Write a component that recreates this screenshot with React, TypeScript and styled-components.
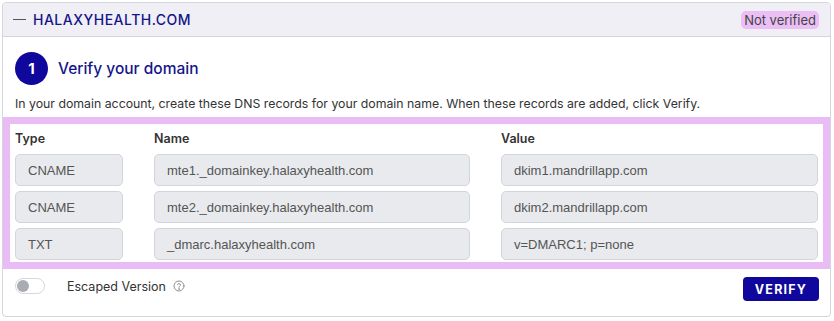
import styled, { createGlobalStyle } from "styled-components";

const Global = createGlobalStyle`
  body {
    margin: 0;
    background: #ffffff;
    font-family: Inter, "Noto Sans", sans-serif;
  }
`;

const Page = styled.div`
  padding: 2px 3px 3px 2px;
`;

const Card = styled.div`
  border: 1px solid #d3d6db;
  border-radius: 4px;
  overflow: hidden;
`;

const Header = styled.div`
  display: flex;
  align-items: center;
  justify-content: space-between;
  height: 33px;
  padding: 0 11px 0 10px;
  background: #efeff5;
  border-bottom: 1px solid #d3d6db;
`;

const Title = styled.div`
  display: flex;
  align-items: center;
  gap: 7px;
  color: #15158a;
  font-size: 14px;
  font-weight: 500;
  letter-spacing: 0.5px;
`;

const Dash = styled.span`
  display: inline-block;
  width: 13px;
  height: 1px;
  background: #555;
`;

const Badge = styled.span`
  background: #ebbff6;
  color: #444;
  font-size: 13px;
  padding: 1px 3px;
  border-radius: 5px;
`;

const Body = styled.div`
  padding: 15px 0 0;
`;

const Step = styled.div`
  display: flex;
  align-items: center;
  gap: 10px;
  padding: 0 12px;
`;

const Circle = styled.div`
  width: 33px;
  height: 33px;
  border-radius: 50%;
  background: #10079c;
  color: #fff;
  display: flex;
  align-items: center;
  justify-content: center;
  font-size: 15px;
  font-weight: 700;
`;

const StepTitle = styled.div`
  color: #15158a;
  font-size: 15.5px;
  font-weight: 500;
`;

const Intro = styled.p`
  margin: 11px 0 6px;
  padding: 0 12px;
  font-size: 12.3px;
  color: #333;
`;

const Records = styled.div`
  border: 7px solid #eabcf6;
  padding: 3px 5px 2px 5px;
  display: grid;
  grid-template-columns: 108px 316px 317px;
  column-gap: 31px;
  row-gap: 5px;
`;

const ColHead = styled.div`
  font-size: 12.5px;
  font-weight: 600;
  color: #333;
  height: 22px;
  display: flex;
  align-items: center;
`;

const Field = styled.div`
  height: 30px;
  display: flex;
  align-items: center;
  padding: 0 12px;
  background: #e8eaed;
  border: 1px solid #d2d5d9;
  border-radius: 5px;
  font-family: "Liberation Sans", Arial, sans-serif;
  font-size: 13px;
  color: #555;
`;

const Footer = styled.div`
  display: flex;
  align-items: center;
  justify-content: space-between;
  padding: 8px 11px 15px 12px;
`;

const Left = styled.div`
  display: flex;
  align-items: center;
  margin-bottom: 6px;
`;

const Toggle = styled.div`
  width: 26px;
  height: 14px;
  border: 1px solid #d6d8dc;
  border-radius: 8px;
  display: flex;
  align-items: center;
  padding: 0 1px;
  margin-right: 22px;
`;

const Knob = styled.div`
  width: 12px;
  height: 12px;
  border-radius: 50%;
  background: #a9adb3;
`;

const Label = styled.span`
  font-size: 12.5px;
  color: #333;
  margin-right: 7px;
`;

const Button = styled.button`
  background: #10079c;
  color: #fff;
  border: none;
  border-radius: 4px;
  width: 76px;
  height: 24px;
  font-family: Inter, sans-serif;
  font-size: 12.5px;
  font-weight: 700;
  letter-spacing: 1.2px;
`;

const rows = [
  ["CNAME", "mte1._domainkey.halaxyhealth.com", "dkim1.mandrillapp.com"],
  ["CNAME", "mte2._domainkey.halaxyhealth.com", "dkim2.mandrillapp.com"],
  ["TXT", "_dmarc.halaxyhealth.com", "v=DMARC1; p=none"],
];

export default function App() {
  return (
    <>
      <Global />
      <Page>
        <Card>
          <Header>
            <Title>
              <Dash />
              HALAXYHEALTH.COM
            </Title>
            <Badge>Not verified</Badge>
          </Header>
          <Body>
            <Step>
              <Circle>1</Circle>
              <StepTitle>Verify your domain</StepTitle>
            </Step>
            <Intro>
              In your domain account, create these DNS records for your domain name. When these records are added, click Verify.
            </Intro>
            <Records>
              <ColHead>Type</ColHead>
              <ColHead>Name</ColHead>
              <ColHead>Value</ColHead>
              {rows.map((r) => r.map((c, i) => <Field key={r[1] + i}>{c}</Field>))}
            </Records>
            <Footer>
              <Left>
                <Toggle>
                  <Knob />
                </Toggle>
                <Label>Escaped Version</Label>
                <svg width="12" height="12" viewBox="0 0 24 24" fill="none" stroke="#8a8f96" strokeWidth="2" strokeLinecap="round">
                  <circle cx="12" cy="12" r="10" />
                  <path d="M9.1 9a3 3 0 0 1 5.8 1c0 2-3 2.5-3 4.5" />
                  <circle cx="12" cy="18" r="0.6" fill="#8a8f96" />
                </svg>
              </Left>
              <Button>VERIFY</Button>
            </Footer>
          </Body>
        </Card>
      </Page>
    </>
  );
}
